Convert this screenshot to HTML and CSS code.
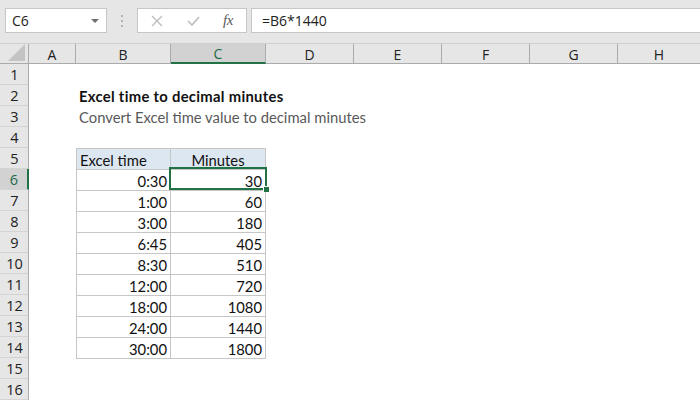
FILE: index.html
```html
<!DOCTYPE html>
<html>
<head>
<meta charset="utf-8">
<link rel="stylesheet" href="styles.css">
</head>
<body>
<div class="app">
  <div class="toolbar">
    <div class="namebox">
      <span class="nametext">C6</span>
      <svg class="caret" width="8" height="5" viewBox="0 0 8 5"><path d="M0 0H8L4 4Z" fill="#6f6f6f"/></svg>
    </div>
    <div class="grip">
      <svg width="2" height="12" viewBox="0 0 2 12"><rect x="0" y="0" width="2" height="2" fill="#b3b3b3"/><rect x="0" y="5" width="2" height="2" fill="#b3b3b3"/><rect x="0" y="10" width="2" height="2" fill="#b3b3b3"/></svg>
    </div>
    <div class="fbtns">
      <svg class="icon-x" width="12" height="12" viewBox="0 0 12 12"><path d="M1 1L11 11M11 1L1 11" stroke="#bdbdbd" stroke-width="1.4" fill="none"/></svg>
      <svg class="icon-check" width="13" height="10" viewBox="0 0 13 10"><path d="M1 5L5 9L12 1" stroke="#bdbdbd" stroke-width="1.6" fill="none"/></svg>
      <span class="fx">fx</span>
    </div>
    <div class="finput">=B6*1440</div>
  </div>

  <div class="colheads">
    <div class="corner">
      <svg width="17" height="17" viewBox="0 0 17 17"><path d="M17 0V17H0Z" fill="#c3c3c3"/></svg>
    </div>
    <div class="ch col-a">A</div>
    <div class="ch col-b">B</div>
    <div class="ch col-c selected">C</div>
    <div class="ch col-d">D</div>
    <div class="ch col-e">E</div>
    <div class="ch col-f">F</div>
    <div class="ch col-g">G</div>
    <div class="ch col-h">H</div>
  </div>

  <div class="main">
    <div class="rowheads">
      <div class="rh">1</div>
      <div class="rh">2</div>
      <div class="rh">3</div>
      <div class="rh">4</div>
      <div class="rh">5</div>
      <div class="rh selected">6</div>
      <div class="rh">7</div>
      <div class="rh">8</div>
      <div class="rh">9</div>
      <div class="rh">10</div>
      <div class="rh">11</div>
      <div class="rh">12</div>
      <div class="rh">13</div>
      <div class="rh">14</div>
      <div class="rh">15</div>
      <div class="rh">16</div>
    </div>
    <div class="sheet">
      <div class="title">Excel time to decimal minutes</div>
      <div class="subtitle">Convert Excel time value to decimal minutes</div>
      <div class="table">
        <div class="cell head">Excel time</div>
        <div class="cell head center">Minutes</div>
        <div class="cell num">0:30</div>
        <div class="cell num active">30<span class="selbox"><span class="handle"></span></span></div>
        <div class="cell num">1:00</div>
        <div class="cell num">60</div>
        <div class="cell num">3:00</div>
        <div class="cell num">180</div>
        <div class="cell num">6:45</div>
        <div class="cell num">405</div>
        <div class="cell num">8:30</div>
        <div class="cell num">510</div>
        <div class="cell num">12:00</div>
        <div class="cell num">720</div>
        <div class="cell num">18:00</div>
        <div class="cell num">1080</div>
        <div class="cell num">24:00</div>
        <div class="cell num">1440</div>
        <div class="cell num">30:00</div>
        <div class="cell num">1800</div>
      </div>
    </div>
  </div>
</div>
</body>
</html>
```

FILE: styles.css
```css
* { box-sizing: border-box; }
html, body { margin: 0; padding: 0; }
body {
  width: 700px;
  height: 400px;
  overflow: hidden;
  background: #ffffff;
  font-family: "Open Sans", "Noto Sans", sans-serif;
}
.app { width: 700px; height: 400px; overflow: hidden; }

/* ---------- formula bar ---------- */
.toolbar {
  height: 44px;
  background: #e6e6e6;
  display: flex;
  align-items: flex-start;
  padding-top: 8px;
  padding-left: 5px;
  border-bottom: 1px solid #d0d0d0;
}
.namebox {
  width: 102px;
  height: 25px;
  background: #fff;
  border: 1px solid #c6c6c6;
  display: flex;
  align-items: center;
  justify-content: space-between;
  padding: 0 7px 0 6px;
}
.nametext { font-size: 14px; color: #222; }
.caret { margin-top: 1px; }
.grip {
  width: 30px;
  height: 25px;
  display: flex;
  align-items: center;
  justify-content: center;
}
.fbtns {
  width: 110px;
  height: 25px;
  background: #fff;
  border: 1px solid #c6c6c6;
  display: flex;
  align-items: center;
  padding-left: 13px;
}
.icon-x { margin-right: 24px; }
.icon-check { margin-right: 23px; }
.fx {
  font-family: "Liberation Serif", "DejaVu Serif", serif;
  font-style: italic;
  font-size: 15px;
  color: #5a5a5a;
  letter-spacing: -0.5px;
}
.finput {
  flex: 1;
  margin-left: 4px;
  height: 25px;
  background: #fff;
  border: 1px solid #c6c6c6;
  border-right: none;
  font-size: 14px;
  color: #222;
  display: flex;
  align-items: center;
  padding-left: 10px;
}

/* ---------- column headers ---------- */
.colheads {
  height: 20px;
  display: flex;
  background: #e6e6e6;
}
.corner {
  width: 29px;
  border-right: 1px solid #ababab;
  border-bottom: 1px solid #ababab;
  display: flex;
  align-items: flex-end;
  justify-content: flex-end;
  padding: 0 3px 2px 0;
}
.ch {
  border-right: 1px solid #ababab;
  border-bottom: 1px solid #ababab;
  display: flex;
  align-items: center;
  justify-content: center;
  font-size: 14px;
  color: #222;
  padding-top: 1px;
}
.ch.selected {
  background: #d2d2d2;
  color: #1e6b48;
  border-bottom: 2px solid #217346;
}
.col-a { width: 47px; }
.col-b, .col-c { width: 95px; }
.col-d, .col-f, .col-g { width: 88px; }
.col-e { width: 88px; }
.col-h { flex: 1; border-right: none; }

/* ---------- body ---------- */
.main { display: flex; }
.rowheads {
  width: 29px;
  background: #e6e6e6;
  border-right: 1px solid #ababab;
}
.rh {
  height: 21px;
  border-bottom: 1px solid #d4d4d4;
  display: flex;
  align-items: center;
  justify-content: center;
  font-size: 14.5px;
  color: #222;
  padding-left: 1px;
}
.rh.selected {
  background: #d2d2d2;
  color: #1e6b48;
  margin-right: -1px;
  border-right: 2px solid #217346;
}

.sheet {
  flex: 1;
  display: grid;
  grid-template-columns: 47px 95px 95px 88px 88px 88px 88px 1fr;
  grid-template-rows: repeat(16, 21px);
  font-family: "Lato", "Liberation Sans", sans-serif;
  font-size: 14.8px;
  color: #111;
}
.title {
  grid-column: 2 / 6;
  grid-row: 2;
  font-weight: bold;
  letter-spacing: 0.3px;
  padding-left: 3px;
  display: flex;
  align-items: center;
  white-space: nowrap;
}
.subtitle {
  grid-column: 2 / 7;
  grid-row: 3;
  color: #595959;
  padding-left: 3px;
  display: flex;
  align-items: center;
  white-space: nowrap;
}
.table {
  grid-column: 2 / 4;
  grid-row: 5 / span 10;
  align-self: start;
  display: grid;
  grid-template-columns: 94px 95px;
  grid-auto-rows: 21px;
  border-left: 1px solid #c6c6c6;
  border-top: 1px solid #c6c6c6;
}
.cell {
  border-right: 1px solid #c6c6c6;
  border-bottom: 1px solid #c6c6c6;
  display: flex;
  align-items: center;
  padding: 1px 3px 0 3px;
  white-space: nowrap;
}
.cell.head { background: #dde7f1; }
.cell.center { justify-content: center; }
.cell.num { justify-content: flex-end; }
.cell.active { position: relative; }
.selbox {
  position: absolute;
  left: -2px;
  top: -3px;
  right: -2px;
  bottom: 0;
  border: 2px solid #217346;
}
.handle {
  position: absolute;
  right: -4px;
  bottom: -4px;
  width: 6px;
  height: 6px;
  background: #217346;
  border-left: 1px solid #fff;
  border-top: 1px solid #fff;
}
```
